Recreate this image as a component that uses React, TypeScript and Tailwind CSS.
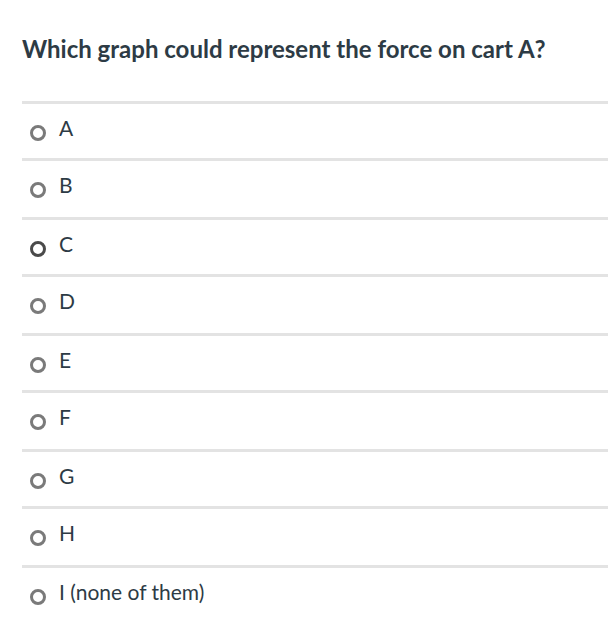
import React from "react";

const options = ["A", "B", "C", "D", "E", "F", "G", "H", "I (none of them)"];

export default function App() {
  return (
    <div className="min-h-[632px] w-[608px] bg-white pl-[22px] font-['Lato','Liberation_Sans',sans-serif] text-[#2d3b45]">
      <h1 className="pt-[34px] text-[24px] font-bold leading-[29px]">
        Which graph could represent the force on cart A?
      </h1>
      <div className="mt-[38px]">
        {options.map((o, i) => (
          <div
            key={o}
            className={
              "flex items-start border-t-[3px] border-[#e3e3e3] pt-[11px] " +
              (i % 2 === 0 ? "h-[57px]" : "h-[59px]")
            }
          >
            <span
              className={
                "ml-[8px] mt-[10px] box-border block h-[16px] w-[16px] shrink-0 rounded-full border-[3px] " +
                (i === 2 ? "border-[#4a4a4a]" : "border-[#7a7a7a]")
              }
            />
            <span className="ml-[13px] text-[21px] leading-[25px]">{o}</span>
          </div>
        ))}
      </div>
    </div>
  );
}
